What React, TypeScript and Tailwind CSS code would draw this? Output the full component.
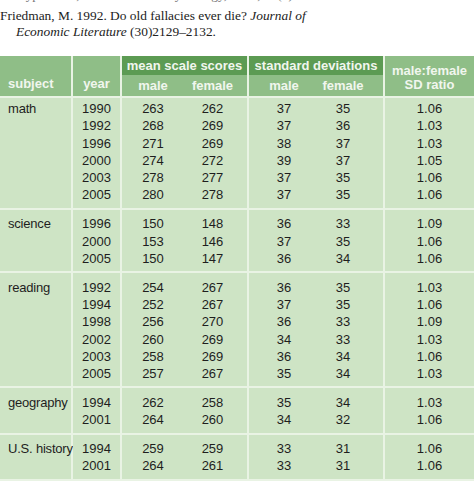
import React from "react";

type Row = [string, string, string, string, string, string];
const groups: { subject: string; rows: Row[] }[] = [
  {
    subject: "math",
    rows: [
      ["1990", "263", "262", "37", "35", "1.06"],
      ["1992", "268", "269", "37", "36", "1.03"],
      ["1996", "271", "269", "38", "37", "1.03"],
      ["2000", "274", "272", "39", "37", "1.05"],
      ["2003", "278", "277", "37", "35", "1.06"],
      ["2005", "280", "278", "37", "35", "1.06"],
    ],
  },
  {
    subject: "science",
    rows: [
      ["1996", "150", "148", "36", "33", "1.09"],
      ["2000", "153", "146", "37", "35", "1.06"],
      ["2005", "150", "147", "36", "34", "1.06"],
    ],
  },
  {
    subject: "reading",
    rows: [
      ["1992", "254", "267", "36", "35", "1.03"],
      ["1994", "252", "267", "37", "35", "1.06"],
      ["1998", "256", "270", "36", "33", "1.09"],
      ["2002", "260", "269", "34", "33", "1.03"],
      ["2003", "258", "269", "36", "34", "1.06"],
      ["2005", "257", "267", "35", "34", "1.03"],
    ],
  },
  {
    subject: "geography",
    rows: [
      ["1994", "262", "258", "35", "34", "1.03"],
      ["2001", "264", "260", "34", "32", "1.06"],
    ],
  },
  {
    subject: "U.S. history",
    rows: [
      ["1994", "259", "259", "33", "31", "1.06"],
      ["2001", "264", "261", "33", "31", "1.06"],
    ],
  },
];

const cell = "bg-[#cee4c5]";
const rowH = "h-[17.3px] leading-[17.3px]";

function Group({ subject, rows, first }: { subject: string; rows: Row[]; first: boolean }) {
  const pad = first ? "pt-[2px] pb-[4px]" : "pt-[5.5px] pb-[4px]";
  return (
    <div className="flex gap-[2px]">
      <div className={`${cell} ${pad} w-[71px] pl-[8px]`}>
        <div className={`${rowH} whitespace-nowrap tracking-[-0.2px]`}>{subject}</div>
      </div>
      <div className={`${cell} ${pad} w-[47px] flex flex-col items-center`}>
        {rows.map((r, i) => (
          <div key={i} className={rowH}>{r[0]}</div>
        ))}
      </div>
      <div className={`${cell} ${pad} w-[125px] flex flex-col`}>
        {rows.map((r, i) => (
          <div key={i} className={`${rowH} flex`}>
            <div className="w-[62px] text-center">{r[1]}</div>
            <div className="w-[57px] text-center">{r[2]}</div>
          </div>
        ))}
      </div>
      <div className={`${cell} ${pad} w-[134px] flex flex-col`}>
        {rows.map((r, i) => (
          <div key={i} className={`${rowH} flex`}>
            <div className="w-[70px] text-center">{r[3]}</div>
            <div className="w-[48px] text-center">{r[4]}</div>
          </div>
        ))}
      </div>
      <div className={`${cell} ${pad} flex-1 flex flex-col items-center`}>
        {rows.map((r, i) => (
          <div key={i} className={rowH}>{r[5]}</div>
        ))}
      </div>
    </div>
  );
}

export default function App() {
  return (
    <div className="w-[474px] h-[482px] overflow-hidden bg-white">
      <div
        className="text-[13.4px] leading-[16px] text-[#222]"
        style={{ fontFamily: '"Liberation Serif", serif' }}
      >
        <div className="-mt-[13px] h-[16px] pl-[16px] text-[#777] whitespace-nowrap">
          Hypothesis, J. Educational Psychology, 1994, 86(4):593
        </div>
        <div className="mt-[5px] whitespace-nowrap">
          Friedman, M. 1992. Do old fallacies ever die? <i>Journal of</i>
        </div>
        <div className="pl-[16px] whitespace-nowrap">
          <i>Economic Literature</i> (30)2129–2132.
        </div>
      </div>

      <div
        className="mt-[16px] bg-[#e9f3e4] flex flex-col gap-[2px] pb-[2px] text-[13px] text-[#1e1e1e]"
        style={{ fontFamily: '"Liberation Sans", Arial, sans-serif' }}
      >
        <div className="flex gap-[2px] h-[40px] text-[13px] font-bold text-[#f1f6ee]">
          <div className="w-[71px] bg-[#8fbe87] pl-[8px] flex items-end pb-[2px]">
            <span className="leading-[20px]">subject</span>
          </div>
          <div className="w-[47px] bg-[#8fbe87] flex items-end justify-center pb-[2px]">
            <span className="leading-[20px]">year</span>
          </div>
          <div className="w-[125px] bg-[#8fbe87] flex flex-col">
            <div className="h-[19px] bg-[#5c9b53] flex items-center justify-center leading-[19px]">
              mean scale scores
            </div>
            <div className="flex flex-1 items-center">
              <div className="w-[62px] text-center">male</div>
              <div className="w-[57px] text-center">female</div>
            </div>
          </div>
          <div className="w-[134px] bg-[#8fbe87] flex flex-col">
            <div className="h-[19px] bg-[#5c9b53] flex items-center justify-center leading-[19px]">
              standard deviations
            </div>
            <div className="flex flex-1 items-center">
              <div className="w-[70px] text-center">male</div>
              <div className="w-[48px] text-center">female</div>
            </div>
          </div>
          <div className="flex-1 bg-[#8fbe87] flex flex-col items-center justify-center pt-[4px] leading-[14px]">
            <div>male:female</div>
            <div>SD ratio</div>
          </div>
        </div>
        {groups.map((g, i) => (
          <Group key={g.subject} subject={g.subject} rows={g.rows} first={i === 0} />
        ))}
      </div>
    </div>
  );
}
